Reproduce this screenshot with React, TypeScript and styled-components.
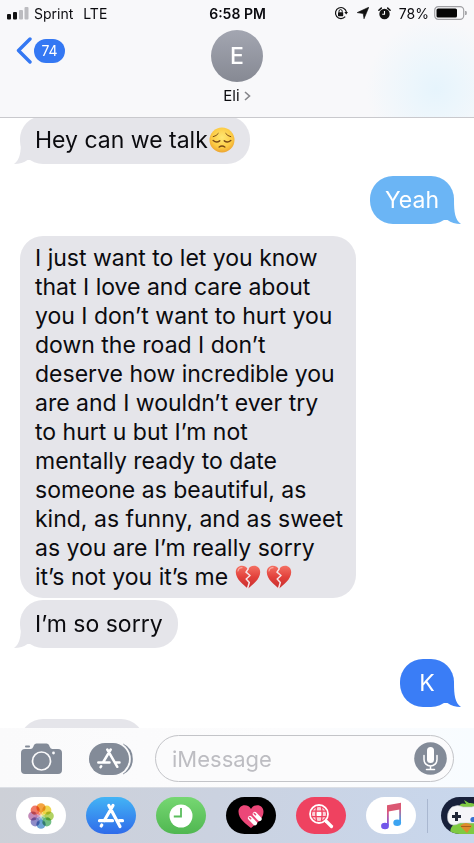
import React from "react";
import styled, { createGlobalStyle } from "styled-components";

const GlobalStyle = createGlobalStyle`
  * { box-sizing: border-box; }
  body {
    margin: 0;
    background: #ffffff;
    color: #0b0b0f;
    font-family: Inter, "Liberation Sans", sans-serif;
  }
  button { font: inherit; color: inherit; border: 0; padding: 0; background: none; cursor: pointer; }
  svg { display: block; flex: none; }
`;

const Page = styled.div`
  display: flex;
  flex-direction: column;
  height: 100vh;
  overflow: hidden;
`;

const Header = styled.header`
  position: relative;
  z-index: 1;
  flex: none;
  height: 118px;
  border-bottom: 1px solid #c9c9cd;
  background: radial-gradient(circle at 92% 76%, #e6f4fc 0, #ecf6fc 24px, rgba(248, 248, 250, 0) 70px), #f8f8fa;
`;

const StatusBar = styled.div`
  display: grid;
  grid-template-columns: 1fr auto 1fr;
  align-items: center;
  height: 26px;
  padding: 0 6px 0 7px;
  font-size: 14px;
`;

const StatusGroup = styled.div<{ $end?: boolean }>`
  display: flex;
  align-items: center;
  gap: 5px;
  justify-content: ${(p) => (p.$end ? "flex-end" : "flex-start")};
`;

const StatusIcons = styled.span`
  display: flex;
  align-items: center;
  gap: 9px;
  margin-right: 3px;
`;

const Network = styled.span`
  margin-left: 5px;
`;

const Clock = styled.time`
  font-weight: 600;
`;

const NavBar = styled.nav`
  display: grid;
  grid-template-columns: 1fr auto 1fr;
  align-items: start;
  padding: 4px 16px 0;
`;

const BackButton = styled.button`
  display: flex;
  align-items: center;
  gap: 2px;
  justify-self: start;
  margin-top: 7px;
`;

const UnreadBadge = styled.span`
  min-width: 31px;
  height: 24px;
  padding: 0 6px;
  border-radius: 12px;
  background: #3478f3;
  color: #ffffff;
  font-size: 14px;
  line-height: 24px;
`;

const Contact = styled.button`
  display: flex;
  flex-direction: column;
  align-items: center;
  gap: 5px;
`;

const Avatar = styled.span`
  width: 52px;
  height: 52px;
  border-radius: 50%;
  background: linear-gradient(#a3a6b1, #868993);
  color: #ffffff;
  font-size: 23px;
  font-weight: 500;
  line-height: 53px;
`;

const ContactName = styled.span`
  display: flex;
  align-items: center;
  gap: 4px;
  font-size: 15px;
  line-height: 18px;
`;

const Thread = styled.main`
  flex: 1;
  min-height: 0;
  margin-top: -2px;
  padding: 0 20px;
  overflow: hidden;
  display: flex;
  flex-direction: column;
`;

type Tone = "gray" | "sky" | "blue";
const tones: Record<Tone, string> = { gray: "#e5e5ea", sky: "#6bb5f5", blue: "#3a7df6" };

const Bubble = styled.div<{ $tone: Tone; $gap: number }>`
  position: relative;
  isolation: isolate;
  flex: none;
  align-self: ${(p) => (p.$tone === "gray" ? "flex-start" : "flex-end")};
  max-width: 336px;
  min-width: 54px;
  margin-bottom: ${(p) => p.$gap}px;
  padding: 7px 15px;
  border-radius: 23px;
  background: ${(p) => tones[p.$tone]};
  color: ${(p) => (p.$tone === "gray" ? "#0b0b0f" : "#ffffff")};
  font-size: 23px;
  line-height: 29px;
`;

const Line = styled.p`
  display: flex;
  align-items: center;
  justify-content: center;
  gap: 1px;
  min-height: 34px;
  margin: 0;
`;

const LongText = styled.div`
  padding-right: 7px;
  margin: 1px -8px -1px 0;
  white-space: pre-line;
  svg { display: inline-block; vertical-align: -4px; margin-right: 5px; }
`;

const LongBubble = styled(Bubble)`
  width: 336px;
  max-width: 100%;
  padding-right: 10px;
`;

const TailShape = styled.svg<{ $sent: boolean }>`
  position: absolute;
  z-index: -1;
  bottom: 0;
  ${(p) => (p.$sent ? "right: -7px;" : "left: -6px; transform: scaleX(-1);")}
`;

const TypingBubble = styled.div`
  flex: none;
  width: 124px;
  height: 48px;
  border-radius: 23px;
  background: #e5e5ea;
`;

const Composer = styled.form`
  flex: none;
  display: flex;
  align-items: center;
  height: 59px;
  padding: 2px 20px 0 21px;
  background: linear-gradient(90deg, #fafafb, #fcfcfd 60%, #f8fcff);
`;

const ToolButton = styled.button<{ $space: number }>`
  flex: none;
  margin-right: ${(p) => p.$space}px;
`;

const Field = styled.label`
  flex: 1;
  min-width: 0;
  display: flex;
  align-items: center;
  height: 47px;
  padding: 0 6px 0 16px;
  border: 1px solid #c3c4c8;
  border-radius: 24px;
  background: #fbfbfc;
`;

const TextBox = styled.input`
  flex: 1;
  min-width: 0;
  padding: 0;
  border: 0;
  outline: 0;
  background: transparent;
  font: inherit;
  font-size: 22px;
  &::placeholder { color: #bdbdc2; opacity: 1; }
`;

const AppStrip = styled.nav`
  flex: none;
  display: flex;
  align-items: center;
  gap: 20px;
  height: 56px;
  padding-left: 16px;
  overflow: hidden;
  border-top: 1px solid #dcdfe5;
  background: linear-gradient(100deg, #cdd0d7, #cbd2e0 45%, #c8d7ed);
`;

const AppPill = styled.button<{ $bg: string }>`
  flex: none;
  display: flex;
  align-items: center;
  justify-content: center;
  width: 50px;
  height: 37px;
  border-radius: 19px;
  overflow: hidden;
  background: ${(p) => p.$bg};
`;

const Divider = styled.span`
  flex: none;
  width: 1px;
  height: 34px;
  margin: 0 -7px 0 -9px;
  background: #a9b7d0;
`;

const Tail = ({ tone }: { tone: Tone }) => (
  <TailShape $sent={tone !== "gray"} width="24" height="24" viewBox="0 0 24 24" aria-hidden="true">
    <path d="M17 0C17 12 18 20 24 24C18.5 24 14 22.5 10.5 20L0 20V0Z" fill={tones[tone]} />
  </TailShape>
);

const Signal = () => (
  <svg width="22" height="13" viewBox="0 0 22 13" aria-label="Signal strength">
    <rect x="0" y="7" width="4" height="5.5" rx="1" fill="#111" />
    <rect x="6" y="5" width="4" height="7.5" rx="1" fill="#111" />
    <rect x="12" y="3" width="4" height="9.5" rx="1" fill="#bcbcc0" />
    <rect x="17.5" y="0" width="4" height="12.5" rx="1" fill="#bcbcc0" />
  </svg>
);

const RotationLock = () => (
  <svg width="14" height="14" viewBox="0 0 14 14" aria-label="Rotation lock">
    <path d="M11.2 10.6A5.5 5.5 0 1 1 12.4 6" fill="none" stroke="#111" strokeWidth="1.2" />
    <path d="M10.3 6H14L12.2 8.6Z" fill="#111" />
    <rect x="4" y="6.2" width="5.2" height="4" rx=".6" fill="#111" />
    <path d="M5 6.5V5.2a1.6 1.6 0 0 1 3.2 0V6.5" fill="none" stroke="#111" />
  </svg>
);

const LocationArrow = () => (
  <svg width="12" height="12" viewBox="0 0 12 12" aria-label="Location">
    <path d="M11.8 .2L7 11.8L6.2 6.6L.2 5.6Z" fill="#111" stroke="#111" strokeWidth=".6" strokeLinejoin="round" />
  </svg>
);

const Alarm = () => (
  <svg width="13" height="13" viewBox="0 0 13 13" aria-label="Alarm">
    <circle cx="6.5" cy="7" r="5.2" fill="#111" />
    <path d="M.9 3.3L3.3 1.1M12.1 3.3L9.7 1.1" stroke="#111" strokeWidth="1.5" strokeLinecap="round" />
    <path d="M6.5 4V7.2H4.2" fill="none" stroke="#fff" strokeWidth="1.1" />
  </svg>
);

const Battery = () => (
  <svg width="34" height="14" viewBox="0 0 34 14" aria-label="Battery">
    <rect x=".7" y=".7" width="29" height="12.6" rx="3.6" fill="none" stroke="#a0a0a4" strokeWidth="1.2" />
    <rect x="2.5" y="2.5" width="20.5" height="9" rx="1.6" fill="#050505" />
    <path d="M31.7 5Q33 7 31.7 9Z" fill="#a0a0a4" stroke="#a0a0a4" />
  </svg>
);

const PensiveFace = () => (
  <svg width="26" height="26" viewBox="0 0 26 26" role="img" aria-label="Pensive face">
    <defs>
      <radialGradient id="face" cx=".5" cy=".4" r=".62">
        <stop offset="0" stopColor="#ffe873" />
        <stop offset=".65" stopColor="#fccb45" />
        <stop offset="1" stopColor="#eba02e" />
      </radialGradient>
    </defs>
    <circle cx="13" cy="13" r="12.5" fill="url(#face)" />
    <g fill="none" stroke="#7a4a16" strokeLinecap="round">
      <path d="M4.2 9.7Q7.5 9 9.3 6.5M21.8 9.7Q18.5 9 16.7 6.5" strokeWidth="1" />
      <path d="M4.2 13.5Q7.5 16.2 10.7 13.8M15.3 13.8Q18.5 16.2 21.8 13.5" strokeWidth="1.5" />
      <path d="M10.2 20Q13 18 15.8 20" strokeWidth="1.5" />
    </g>
  </svg>
);

const BrokenHeart = () => (
  <svg width="26" height="24" viewBox="0 0 26 24" role="img" aria-label="Broken heart">
    <defs>
      <linearGradient id="heart" x1="0" y1="0" x2="0" y2="1">
        <stop offset="0" stopColor="#f47063" />
        <stop offset=".5" stopColor="#e2413b" />
        <stop offset="1" stopColor="#c92d2e" />
      </linearGradient>
    </defs>
    <path d="M13 23.5C9 20 .8 14.4 .8 7.2C.8 3 3.6 .8 6.9 .8C9.7 .8 12 2.4 13 4.5C14 2.4 16.3 .8 19.1 .8C22.4 .8 25.2 3 25.2 7.2C25.2 14.4 17 20 13 23.5Z" fill="url(#heart)" />
    <path d="M13.5 3.4L11 7.2L15 10.5L11.2 14L14.3 17.5L12.5 23.8" fill="none" stroke="#f5e6e9" strokeWidth="1.5" strokeLinejoin="round" />
    <path d="M3 6Q3.6 2.8 7 2.7" fill="none" stroke="#f9aaa0" strokeWidth="1.2" strokeLinecap="round" />
  </svg>
);

const CameraIcon = () => (
  <svg width="41" height="32" viewBox="0 0 41 32" aria-hidden="true">
    <path d="M4 6H9.5Q11.5 6 12.3 3.8L13 2Q13.7 .5 15.5 .5H25.5Q27.3 .5 28 2L28.7 3.8Q29.5 6 31.5 6H37Q41 6 41 10V27Q41 31 37 31H4Q0 31 0 27V10Q0 6 4 6Z" fill="#838b98" />
    <rect x="4" y="2.6" width="5" height="1.8" rx=".9" fill="#838b98" />
    <circle cx="20.5" cy="18" r="9" fill="none" stroke="#fafafb" strokeWidth="1.7" />
    <circle cx="32.5" cy="10" r="1.4" fill="#fafafb" />
  </svg>
);

const StoreMark = () => (
  <svg width="28" height="28" viewBox="0 0 28 28" aria-hidden="true">
    <g stroke="#fff" strokeWidth="3.2" strokeLinecap="round">
      <path d="M11.8 3.5L23 24.5M16 3.5L7.2 18.7M4.8 23L4.2 24M2.5 18.7H15.5M22 18.7H25.5" />
    </g>
  </svg>
);

const DrawerIcon = () => (
  <svg width="45" height="34" viewBox="0 0 45 34" aria-hidden="true">
    <path d="M34 1.6A17 17 0 0 1 34 32.4Z" fill="#838b98" />
    <rect x="-1.6" y="-.6" width="43.4" height="35.2" rx="17.4" fill="#fafafb" />
    <rect x="0" y="1" width="40" height="32" rx="16" fill="#838b98" />
    <g stroke="#fff" strokeWidth="2.5" strokeLinecap="round">
      <path d="M18.3 7.5L28.3 24.8M21.7 7.5L14 20.5M12.2 24.2L11.6 25.2M9.3 20.5H20.5M27 20.5H30.5" />
    </g>
  </svg>
);

const MicIcon = () => (
  <svg width="33" height="33" viewBox="0 0 33 33" aria-hidden="true">
    <circle cx="16.5" cy="16.5" r="16.3" fill="#838b98" />
    <rect x="13" y="5" width="7" height="16" rx="3.5" fill="#fff" />
    <path d="M10 13.5V17.5A6.5 6.5 0 0 0 23 17.5V13.5M16.5 24V27.5M12.5 27.5H20.5" fill="none" stroke="#fff" strokeWidth="1.5" strokeLinecap="round" />
  </svg>
);

const petals = ["#f39a2d", "#ecd23c", "#a9cd52", "#62b778", "#5f9ad0", "#8380c2", "#bd7db2", "#ef6c58"];

const Petal = styled.circle`
  mix-blend-mode: multiply;
`;

const PhotosIcon = () => (
  <svg width="28" height="28" viewBox="0 0 28 28" aria-hidden="true">
    {petals.map((color, i) => (
      <Petal key={color} cx="14" cy="5.8" r="4.6" fill={color} opacity=".9" transform={`rotate(${i * 45} 14 14)`} />
    ))}
    {petals.map((color, i) => (
      <path key={color} d="M11.8 8.5L14 13.6L16.2 8.5Z" fill={color} opacity=".8" transform={`rotate(${i * 45} 14 14)`} />
    ))}
  </svg>
);

const ClockIcon = () => (
  <svg width="24" height="24" viewBox="0 0 24 24" aria-hidden="true">
    <circle cx="12" cy="12" r="11.5" fill="#fff" />
    <path d="M12 4V12.5H4.8" fill="none" stroke="#5abd5d" strokeWidth="1.8" />
  </svg>
);

const TouchHeartIcon = () => (
  <svg width="28" height="26" viewBox="0 0 28 26" aria-hidden="true">
    <path d="M14 25C9 21 1.5 15.8 1.5 8.7C1.5 4.7 4.3 2.2 7.7 2.2C10.5 2.2 13 3.8 14 6C15 3.8 17.5 2.2 20.3 2.2C23.7 2.2 26.5 4.7 26.5 8.7C26.5 15.8 19 21 14 25Z" fill="#ec4778" />
    <g stroke="#fff" strokeWidth="4.2" strokeLinecap="round">
      <path d="M13 15L18 20.2M17.8 11L22.6 16" />
    </g>
    <path d="M12.5 14.5L13.7 15.7M17.3 10.5L18.5 11.7" stroke="#ec4778" strokeWidth="1.6" strokeLinecap="round" />
  </svg>
);

const SearchIcon = () => (
  <svg width="26" height="26" viewBox="0 0 26 26" aria-hidden="true">
    <g fill="none" stroke="#fff" strokeLinecap="round">
      <circle cx="11" cy="11" r="9" strokeWidth="1.8" />
      <path d="M18 18L23.5 23.5" strokeWidth="3.2" />
    </g>
    <circle cx="11" cy="11" r="7" fill="#fbd1d8" />
    <path d="M8.5 3.5Q7 11 8.5 18.5M13.5 3.5Q15 11 13.5 18.5M3.5 8.2H18.5M3.5 13.7H18.5" fill="none" stroke="#ef4260" strokeWidth="1.3" />
    <path d="M9 9H13V13H9Z" fill="#fff" />
  </svg>
);

const MusicIcon = () => (
  <svg width="24" height="28" viewBox="0 0 24 28" aria-hidden="true">
    <defs>
      <linearGradient id="noteLeft" gradientUnits="userSpaceOnUse" x1="0" y1="9" x2="0" y2="24">
        <stop offset="0" stopColor="#e0587c" />
        <stop offset="1" stopColor="#7357ea" />
      </linearGradient>
      <linearGradient id="noteRight" gradientUnits="userSpaceOnUse" x1="0" y1="6" x2="0" y2="20">
        <stop offset="0" stopColor="#d95c80" />
        <stop offset="1" stopColor="#3ca4f1" />
      </linearGradient>
    </defs>
    <path d="M8 4H9.8V23.5H8Z" fill="url(#noteLeft)" />
    <ellipse cx="6" cy="24" rx="3.9" ry="3.2" fill="#7357ea" />
    <path d="M20.2 2H22V20H20.2Z" fill="url(#noteRight)" />
    <ellipse cx="18.2" cy="20.8" rx="3.9" ry="3.2" fill="#3ca4f1" />
    <path d="M8 3.2L22 .7V7.3L8 9.8Z" fill="#db5873" />
  </svg>
);

const GameIcon = () => (
  <svg width="50" height="37" viewBox="0 0 50 37" aria-hidden="true">
    <path d="M10 37C8 33 11 28 15 26L18 10Q19 5 25 7L23 3L28 6Q37 5 39 17L42 37Z" fill="#7fca42" />
    <path d="M11 10Q17 7 22 10H31Q37 7 42 11Q47 17 45 25Q42 30 36 26H19Q10 31 7 24Q5 15 11 10Z" fill="#f5f5f8" stroke="#c4c7d0" strokeWidth=".6" />
    <path d="M15.5 15V24M11 19.5H20" stroke="#202637" strokeWidth="3" />
    <circle cx="32" cy="22.5" r="2.6" fill="#356fd0" />
    <path d="M19 29Q25 23 31 29L26 36Z" fill="#de8a2c" />
    <path d="M20 29.5H30" stroke="#a85e1c" />
  </svg>
);

const apps = [
  { name: "Photos", bg: "#ffffff", icon: <PhotosIcon /> },
  { name: "App Store", bg: "linear-gradient(#43b4f5, #2f6bea)", icon: <StoreMark /> },
  { name: "Recents", bg: "linear-gradient(#76d772, #50b751)", icon: <ClockIcon /> },
  { name: "Digital Touch", bg: "#000000", icon: <TouchHeartIcon /> },
  { name: "Image search", bg: "#ef4260", icon: <SearchIcon /> },
  { name: "Music", bg: "#ffffff", icon: <MusicIcon /> },
];

const longMessage = [
  "I just want to let you know",
  "that I love and care about",
  "you I don’t want to hurt you",
  "down the road I don’t",
  "deserve how incredible you",
  "are and I wouldn’t ever try",
  "to hurt u but I’m not",
  "mentally ready to date",
  "someone as beautiful, as",
  "kind, as funny, and as sweet",
  "as you are I’m really sorry",
  "it’s not you it’s me ",
].join("\n");

export default function App() {
  return (
    <Page>
      <GlobalStyle />
      <Header>
        <StatusBar>
          <StatusGroup>
            <Signal />
            <span>Sprint</span>
            <Network>LTE</Network>
          </StatusGroup>
          <Clock>6:58 PM</Clock>
          <StatusGroup $end>
            <StatusIcons>
              <RotationLock />
              <LocationArrow />
              <Alarm />
            </StatusIcons>
            <span>78%</span>
            <Battery />
          </StatusGroup>
        </StatusBar>
        <NavBar>
          <BackButton aria-label="Back, 74 unread">
            <svg width="16" height="27" viewBox="0 0 16 27" aria-hidden="true">
              <path d="M14 2L2.5 13.5L14 25" fill="none" stroke="#3478f3" strokeWidth="3.4" strokeLinecap="round" strokeLinejoin="round" />
            </svg>
            <UnreadBadge>74</UnreadBadge>
          </BackButton>
          <Contact>
            <Avatar>E</Avatar>
            <ContactName>
              Eli
              <svg width="7" height="10" viewBox="0 0 7 10" aria-hidden="true">
                <path d="M1 1L5.5 5L1 9" fill="none" stroke="#85858a" strokeWidth="1.6" />
              </svg>
            </ContactName>
          </Contact>
        </NavBar>
      </Header>

      <Thread>
        <Bubble $tone="gray" $gap={12}>
          <Tail tone="gray" />
          <Line>Hey can we talk <PensiveFace /></Line>
        </Bubble>
        <Bubble $tone="sky" $gap={12}>
          <Tail tone="sky" />
          <Line>Yeah</Line>
        </Bubble>
        <LongBubble $tone="gray" $gap={2}>
          <LongText>
            {longMessage}
            <BrokenHeart />
            <BrokenHeart />
          </LongText>
        </LongBubble>
        <Bubble $tone="gray" $gap={11}>
          <Tail tone="gray" />
          <Line>I’m so sorry</Line>
        </Bubble>
        <Bubble $tone="blue" $gap={12}>
          <Tail tone="blue" />
          <Line>K</Line>
        </Bubble>
        <TypingBubble />
      </Thread>

      <Composer onSubmit={(e) => e.preventDefault()}>
        <ToolButton type="button" aria-label="Camera" $space={27}>
          <CameraIcon />
        </ToolButton>
        <ToolButton type="button" aria-label="Apps" $space={21}>
          <DrawerIcon />
        </ToolButton>
        <Field>
          <TextBox placeholder="iMessage" aria-label="iMessage" />
          <button type="button" aria-label="Record audio">
            <MicIcon />
          </button>
        </Field>
      </Composer>

      <AppStrip aria-label="iMessage apps">
        {apps.map((app) => (
          <AppPill key={app.name} $bg={app.bg} aria-label={app.name}>
            {app.icon}
          </AppPill>
        ))}
        <Divider />
        <AppPill $bg="#17203a" aria-label="Games">
          <GameIcon />
        </AppPill>
      </AppStrip>
    </Page>
  );
}
